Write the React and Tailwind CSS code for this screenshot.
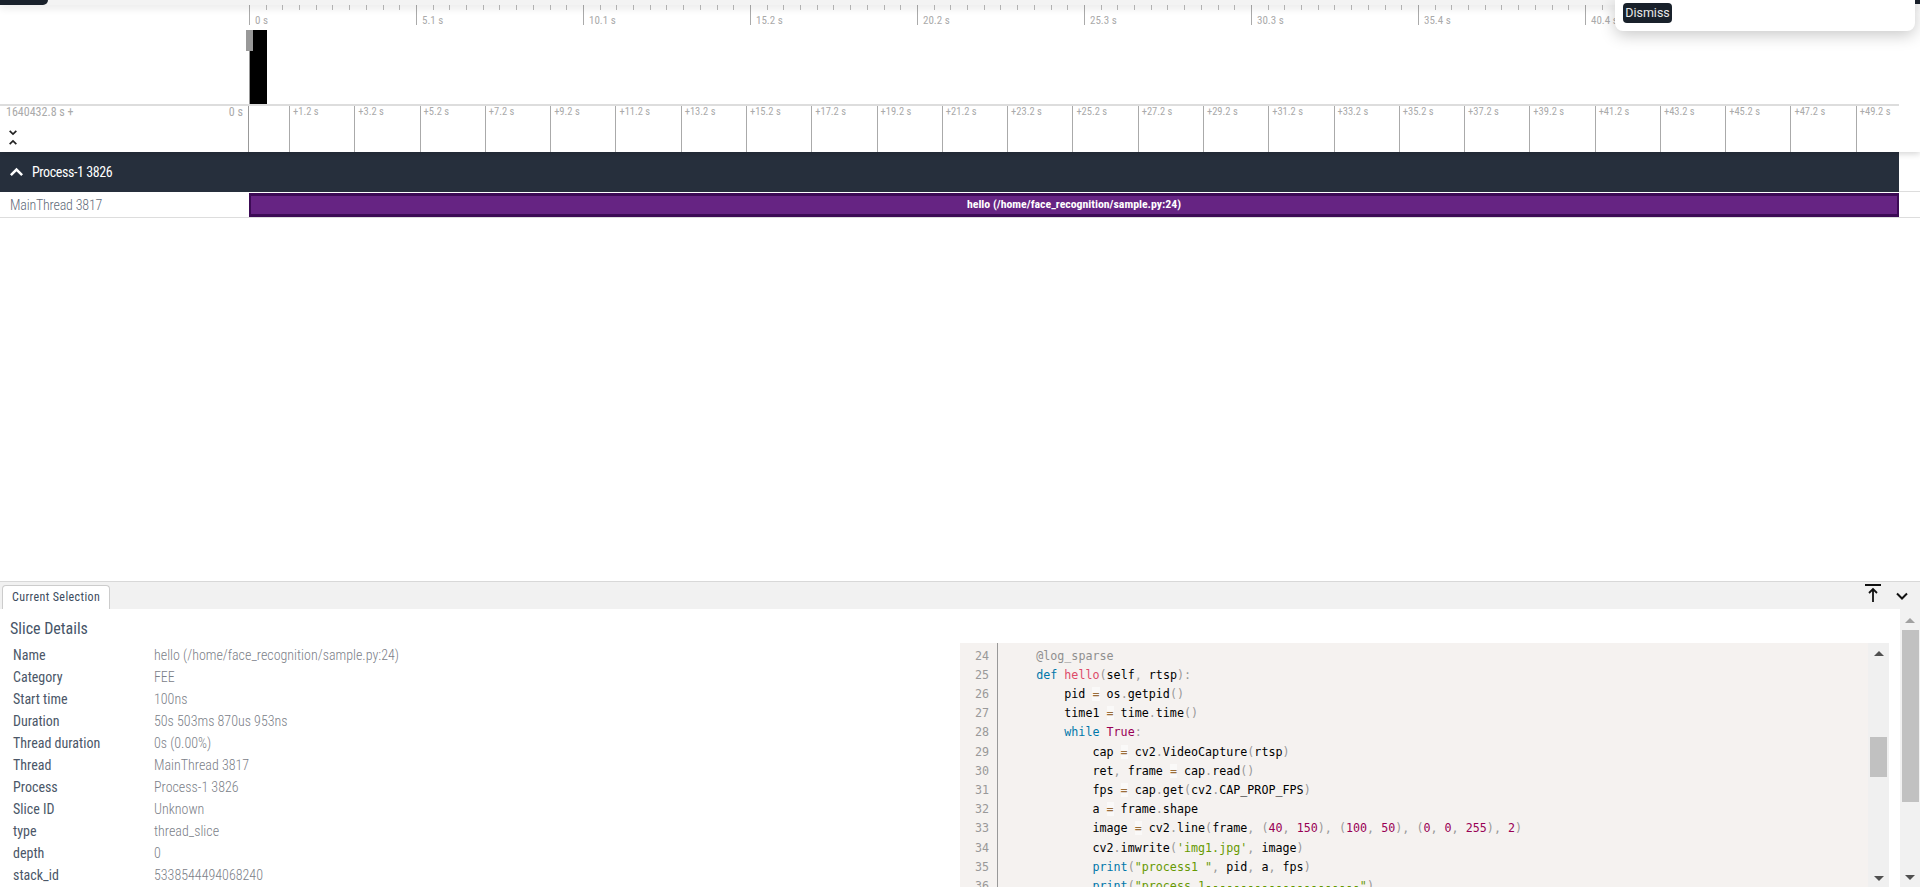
import React from 'react';

const overviewLabels = ['0 s', '5.1 s', '10.1 s', '15.2 s', '20.2 s', '25.3 s', '30.3 s', '35.4 s', '40.4 s'];
const timeLabels = Array.from({ length: 25 }, (_, i) => `+${(1.2 + i * 2).toFixed(1)} s`);

const details = [
    ['Name', 'hello (/home/face_recognition/sample.py:24)'],
    ['Category', 'FEE'],
    ['Start time', '100ns'],
    ['Duration', '50s 503ms 870us 953ns'],
    ['Thread duration', '0s (0.00%)'],
    ['Thread', 'MainThread 3817'],
    ['Process', 'Process-1 3826'],
    ['Slice ID', 'Unknown'],
    ['type', 'thread_slice'],
    ['depth', '0'],
    ['stack_id', '5338544494068240'],
];

const codeLines = [
    '    @log_sparse',
    '    def hello(self, rtsp):',
    '        pid = os.getpid()',
    '        time1 = time.time()',
    '        while True:',
    '            cap = cv2.VideoCapture(rtsp)',
    '            ret, frame = cap.read()',
    '            fps = cap.get(cv2.CAP_PROP_FPS)',
    '            a = frame.shape',
    '            image = cv2.line(frame, (40, 150), (100, 50), (0, 0, 255), 2)',
    "            cv2.imwrite('img1.jpg', image)",
    '            print("process1 ", pid, a, fps)',
    '            print("process 1----------------------")',
];

// Small stand-in for the prism theme on the page
const tokenPattern = /(@\w+)|("[^"]*"|'[^']*')|\b(def|while|print)\b|\b(hello)\b|\b(True|\d+)\b|(=)|([(),:.])/g;

const highlight = (line) => {
    const parts = [];
    let last = 0;
    for (const m of line.matchAll(tokenPattern)) {
        if (m.index > last) parts.push(line.slice(last, m.index));
        let cls = 'text-[#999]';
        if (m[1]) cls = 'text-[#8f8f8f]';
        if (m[2]) cls = 'text-[#669900]';
        if (m[3]) cls = 'text-[#0077aa]';
        if (m[4]) cls = 'text-[#dd4a68]';
        if (m[5]) cls = 'text-[#990055]';
        if (m[6]) cls = 'text-[#9a6e3a] bg-white/50';
        parts.push(<span key={m.index} className={cls}>{m[0]}</span>);
        last = m.index + m[0].length;
    }
    parts.push(line.slice(last));
    return parts;
};

const Arrow = ({ down, className }) => (
    <div className={`w-0 h-0 border-x-[5px] border-x-transparent ${down ? 'border-t-[5px] border-t-[#505050]' : 'border-b-[5px] border-b-[#505050]'} ${className || ''}`}></div>
);

const Chevron = ({ d, className }) => (
    <svg viewBox="0 0 12 8" className={className} fill="none" stroke="currentColor" strokeWidth="2">
        <path d={d} />
    </svg>
);

const App = () => {
    return (
        <div className="relative h-[887px] w-[1920px] overflow-hidden bg-white flex flex-col [font-family:Roboto,sans-serif] [font-stretch:75%]">
            {/* leftovers of the page header peeking in at the top */}
            <div className="absolute left-0 top-0 z-20 h-[5px] w-[48px] rounded-br-md bg-[#19212b]"></div>
            <div className="absolute right-0 top-0 z-20 h-[4px] w-[6px] bg-[#19212b]"></div>

            {/* Cookie popup */}
            <div className="absolute right-[5px] top-0 z-30 h-[31px] w-[300px] rounded-b-lg bg-white pl-2 pt-[3px] shadow-[0_4px_16px_rgba(0,0,0,0.22)]">
                <button className="block h-[20px] w-[49px] rounded-[4px] bg-[#19212b] text-center text-[12.5px] leading-[20px] text-[#e8e8e8] [font-stretch:100%]">Dismiss</button>
            </div>

            <div className="relative z-10 h-[5px] shrink-0 bg-[#f3f3f3] shadow-[0_2px_8px_rgba(0,0,0,0.14)]"></div>

            {/* Header panels */}
            <div className="relative z-[5] shrink-0 bg-white shadow-[0_2px_6px_rgba(0,0,0,0.16)]">
                <div className="w-[1899px] h-[99px] flex flex-col">
                    <div className="flex h-[20px] pl-[249px]">
                        {overviewLabels.map((label) => (
                            <div key={label} className="relative w-[167px] shrink-0 border-l border-[#aaa]">
                                <div className="flex h-[5px] items-end pl-[15.7px] pt-[2px]">
                                    {Array.from({ length: 9 }, (_, i) => (
                                        <div key={i} className="h-[5px] w-[16.7px] shrink-0 border-l border-[#bbb]"></div>
                                    ))}
                                </div>
                                <div className="pl-[5px] pt-[4px] text-[11px] leading-[13px] text-[#aaa]">{label}</div>
                            </div>
                        ))}
                    </div>
                    <div className="relative ml-[249px] mt-[5px] h-[74px] w-[18px] border-l border-[#999] bg-black">
                        <div className="absolute -left-[4px] top-0 h-[21px] w-[7px] bg-[#999]"></div>
                    </div>
                </div>

                <div className="flex h-[48px] w-[1899px] border-t-2 border-[#ddd]">
                    <div className="relative h-full w-[249px] shrink-0 border-r border-[#999]">
                        <div className="flex justify-between pl-[6px] pr-[5px] text-[12px] leading-[12px] text-[#aaa]">
                            <span>1640432.8 s +</span>
                            <span>0 s</span>
                        </div>
                        <div className="ml-[8px] mt-[11px] flex flex-col gap-[3px] text-[#222]">
                            <Chevron d="M2 2l4 4 4-4" className="h-[7px] w-[10px]" />
                            <Chevron d="M2 6l4-4 4 4" className="h-[7px] w-[10px]" />
                        </div>
                    </div>
                    <div className="h-full w-[40px] shrink-0"></div>
                    {timeLabels.map((label) => (
                        <div key={label} className="h-full w-[65.29px] shrink-0 border-l border-[#aaa] pl-[3px] text-[10.5px] leading-[12px] text-[#aaa]">{label}</div>
                    ))}
                </div>
            </div>

            {/* Process track */}
            <div className="flex h-[40px] shrink-0">
                <div className="flex w-[1899px] items-center bg-[#262f3c] pl-[9px] text-white">
                    <Chevron d="M1.5 6.5L6 2l4.5 4.5" className="h-[10px] w-[15px]" />
                    <span className="ml-[8px] text-[14px] tracking-[-0.4px]">Process-1 3826</span>
                </div>
                <div className="flex-1 border-b border-[#ddd]"></div>
            </div>

            {/* Thread track */}
            <div className="flex h-[26px] shrink-0 border-b border-[#ddd]">
                <div className="flex w-[249px] shrink-0 items-center pl-[10px] pt-[1px] text-[14px] font-light tracking-[-0.2px] text-[#5f6b7a]">MainThread 3817</div>
                <div className="mt-[1px] flex h-[24px] w-[1650px] items-center justify-center border-x-2 border-y-[3px] border-[#3c0b55] bg-[#662483] text-[11.8px] font-bold text-white">
                    hello (/home/face_recognition/sample.py:24)
                </div>
            </div>

            <div className="flex-1"></div>

            {/* Details panel */}
            <div className="flex h-[306px] shrink-0 flex-col border-t border-[#d8d8d8]">
                <div className="flex h-[27px] shrink-0 items-end bg-[#f1f1f1] pl-[2px] pr-[12px]">
                    <div className="h-[24px] w-[108px] rounded-t-[4px] border-x border-t border-[#ccc] bg-white pl-[9px] text-[12px] leading-[22px] tracking-[0.4px] text-[#3c4b5d]">Current Selection</div>
                    <div className="ml-auto flex h-full items-center gap-[14px] text-[#111]">
                        <svg viewBox="0 0 18 20" className="-mt-[5px] h-[20px] w-[18px]" fill="none" stroke="currentColor" strokeWidth="1.8">
                            <path d="M1 2h16M9 19V6M5 10l4-4 4 4" />
                        </svg>
                        <Chevron d="M1 1.5l5 5 5-5" className="h-[8px] w-[12px]" />
                    </div>
                </div>

                <div className="flex min-h-0 flex-1">
                    <div className="flex min-w-0 flex-1">
                        <div className="w-[960px] shrink-0 pl-[10px] pt-[10px]">
                            <h2 className="text-[16px] leading-[19px] text-[#465568]">Slice Details</h2>
                            <div className="mt-[6px] pl-[3px]">
                                {details.map(([name, value]) => (
                                    <div key={name} className="flex h-[22px] items-center text-[14px]">
                                        <span className="w-[141px] shrink-0 text-[#4b5768]">{name}</span>
                                        <span className="font-light text-[#7b8088]">{value}</span>
                                    </div>
                                ))}
                            </div>
                        </div>

                        {/* Source preview */}
                        <div className="mt-[34px] flex h-[244px] w-[929px] shrink-0 overflow-hidden bg-[#f5f2f0] [font-family:'DejaVu_Sans_Mono',monospace] text-[11.7px] leading-[19.2px] [font-stretch:100%]">
                            <div className="w-[38px] shrink-0 border-r border-[#999] pr-[8px] pt-[3.6px] text-right text-[#999]">
                                {codeLines.map((_, i) => <div key={i}>{i + 24}</div>)}
                            </div>
                            <div className="min-w-0 flex-1 whitespace-pre pl-[10px] pt-[3.6px] text-black">
                                {codeLines.map((line, i) => <div key={i}>{highlight(line)}</div>)}
                            </div>
                            <div className="flex w-[21px] shrink-0 flex-col items-center bg-[#f0f0f0]">
                                <Arrow className="mt-[8px]" />
                                <div className="mt-[81px] h-[40px] w-[17px] bg-[#c1c1c1]"></div>
                                <Arrow down className="mt-auto mb-[6px]" />
                            </div>
                        </div>
                    </div>

                    {/* Page scrollbar */}
                    <div className="flex w-[20px] shrink-0 flex-col items-center bg-[#f1f1f1]">
                        <Arrow className="mt-[9px] opacity-50" />
                        <div className="mt-[7px] h-[172px] w-[17px] bg-[#c1c1c1]"></div>
                        <Arrow down className="mt-auto mb-[7px]" />
                    </div>
                </div>
            </div>
        </div>
    );
};

export default App;
